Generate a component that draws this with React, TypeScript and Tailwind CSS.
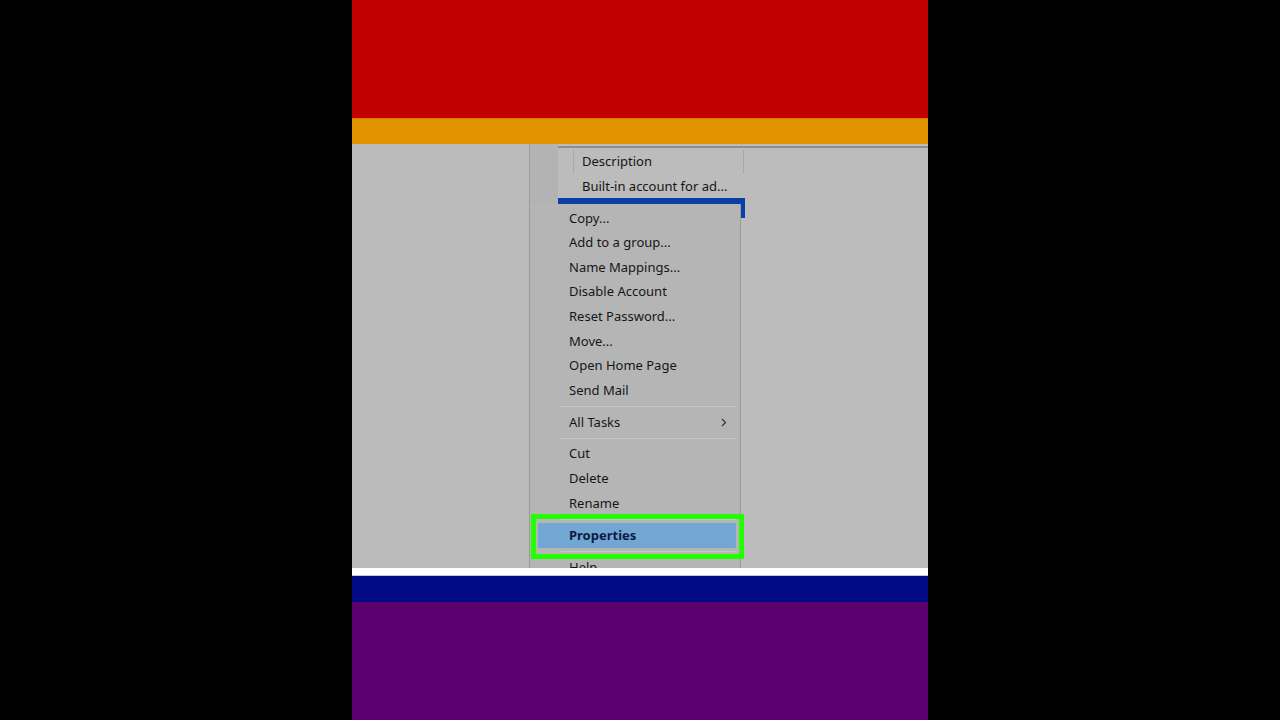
import React from "react";

type Entry = { label?: string; sep?: boolean; sub?: boolean; hot?: boolean };

const menu: Entry[] = [
  { label: "Copy..." },
  { label: "Add to a group..." },
  { label: "Name Mappings..." },
  { label: "Disable Account" },
  { label: "Reset Password..." },
  { label: "Move..." },
  { label: "Open Home Page" },
  { label: "Send Mail" },
  { sep: true },
  { label: "All Tasks", sub: true },
  { sep: true },
  { label: "Cut" },
  { label: "Delete" },
  { label: "Rename" },
  { sep: true },
  { label: "Properties", hot: true },
  { sep: true },
  { label: "Help" },
];

function ContextMenu() {
  return (
    <div className="absolute left-[177px] top-[60px] w-[212px] h-[420px] bg-[#b5b5b5] border-l border-r border-[#9a9a9a] pt-[2px]">
      {menu.map((m, i) =>
        m.sep ? (
          <div key={i} className="h-[7.3px] flex items-center pl-[31px] pr-[5px]">
            <div className="h-px w-full bg-[#c6c6c6]" />
          </div>
        ) : (
          <div
            key={i}
            className={
              m.hot
                ? "h-[25px] ml-[8px] mr-[4px] pl-[31px] flex items-center bg-[#72a7d3] font-bold text-[#0d1a45]"
                : "h-[24.6px] pl-[39px] pr-[12px] flex items-center justify-between text-[#151515]"
            }
          >
            <span>{m.label}</span>
            {m.sub && (
              <svg width="6" height="9" viewBox="0 0 6 9" className="mr-[1px]">
                <path d="M1 1 L4.5 4.5 L1 8" fill="none" stroke="#333" strokeWidth="1.2" />
              </svg>
            )}
          </div>
        )
      )}
      {/* green annotation around Properties */}
      <div className="absolute left-[1px] top-[310px] w-[213px] h-[45px] border-[5px] border-[#22ff00]" />
    </div>
  );
}

export default function App() {
  return (
    <div className="h-screen w-full bg-black flex justify-center" style={{ fontFamily: '"Noto Sans", "Open Sans", sans-serif' }}>
      <div className="w-[576px] flex flex-col">
        <div className="h-[118px] bg-[#c10000]" />
        <div className="h-[26px] bg-[#e49300] border-t border-[#d97a06]" />
        <div className="h-[424px] relative overflow-hidden flex text-[13px]">
          <div className="w-[177px] bg-[#bababa]" />
          <div className="w-[29px] bg-[#b3b3b3] border-l border-[#9c9c9c]" />
          <div className="flex-1 bg-[#bcbcbc] pt-[2px]">
            <div className="border-t-2 border-[#8e8e8e]">
              <div className="flex h-[28px] items-center">
                <div className="w-[16px] h-[24px] border-r border-[#a8a8a8]" />
                <div className="w-[170px] h-[24px] pl-[8px] border-r border-[#a8a8a8] flex items-center text-[#151515]">
                  Description
                </div>
              </div>
              <div className="h-[22px] pl-[24px] flex items-center text-[#151515]">
                Built-in account for ad...
              </div>
              <div className="w-[187px] h-[20px] border-t-[6px] border-r-[5px] border-[#0a3ea8]" />
            </div>
          </div>
          <ContextMenu />
        </div>
        <div className="h-[8px] bg-white border-b border-[#c8c8c8]" />
        <div className="h-[26px] bg-[#000a85]" />
        <div className="flex-1 bg-[#5c0070]" />
      </div>
    </div>
  );
}
